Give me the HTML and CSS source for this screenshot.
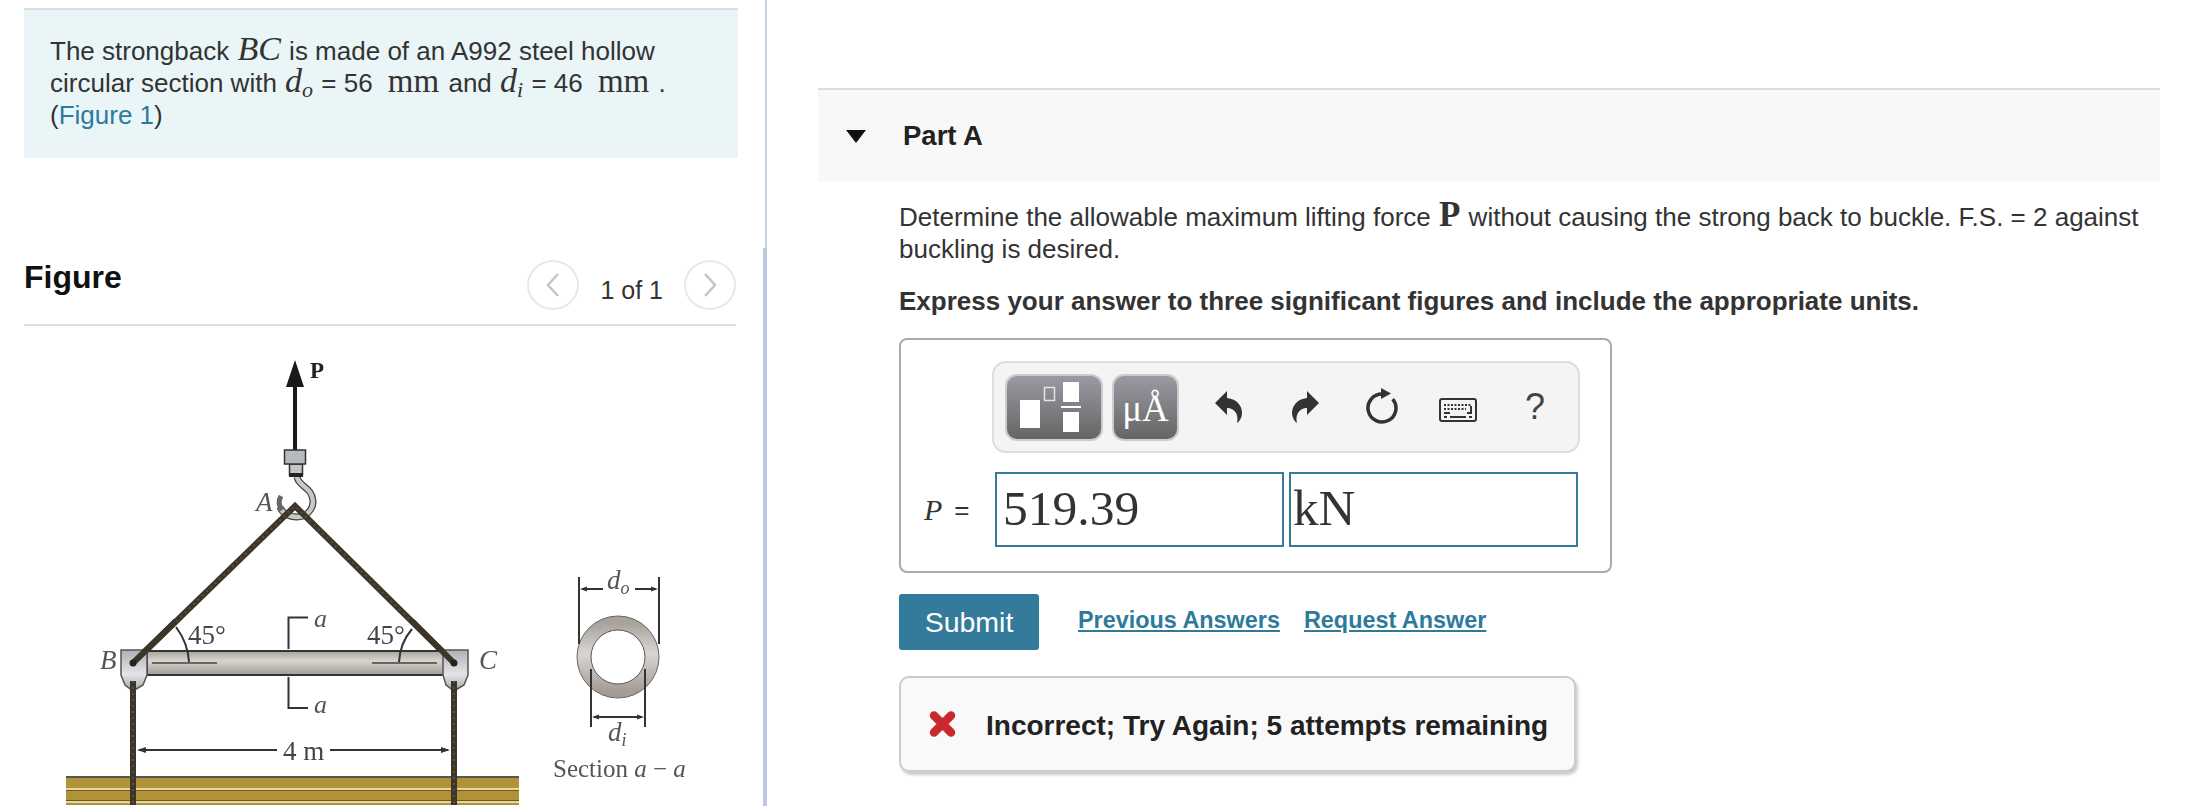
FILE: index.html
```html
<!DOCTYPE html>
<html lang="en">
<head>
<meta charset="utf-8">
<title>Part A</title>
<link rel="stylesheet" href="styles.css">
</head>
<body>
<div class="page">
  <section class="left">
    <div class="info">The strongback <span class="mi big">BC</span> is made of an A992 steel hollow<br>circular section with <span class="mi big">d<sub>o</sub></span> = 56 <span class="mu">mm</span> and <span class="mi big">d<sub>i</sub></span> = 46 <span class="mu">mm</span> .<br>(<a class="link" href="#">Figure 1</a>)</div>
    <header class="fig-head">
      <h2 class="fig-title">Figure</h2>
      <nav class="pager">
        <span class="circle"><svg width="16" height="26" viewBox="0 0 16 26"><path d="M13 2 3 13l10 11" fill="none" stroke="#c4c4c4" stroke-width="2.5"/></svg></span>
        <span class="count">1 of 1</span>
        <span class="circle"><svg width="16" height="26" viewBox="0 0 16 26"><path d="m3 2 10 11L3 24" fill="none" stroke="#c4c4c4" stroke-width="2.5"/></svg></span>
      </nav>
    </header>
    <svg class="diagram" width="714" height="479" viewBox="24 327 714 479">
      <defs>
        <linearGradient id="beam" x1="0" y1="0" x2="0" y2="1">
          <stop offset="0" stop-color="#a8a29b"/><stop offset=".4" stop-color="#d8d4cf"/><stop offset="1" stop-color="#a39d96"/>
        </linearGradient>
        <linearGradient id="plate" x1="0" y1="0" x2="0" y2="1">
          <stop offset="0" stop-color="#aeb2b6"/><stop offset=".6" stop-color="#e4e5e6"/><stop offset="1" stop-color="#9ea2a6"/>
        </linearGradient>
        <linearGradient id="ring" x1="0" y1="0" x2="0" y2="1">
          <stop offset="0" stop-color="#a8a29c"/><stop offset=".45" stop-color="#d9d6d2"/><stop offset="1" stop-color="#a59c96"/>
        </linearGradient>
      </defs>
      <!-- lumber -->
      <rect x="66" y="778" width="453" height="28" fill="#b09338"/>
      <rect x="66" y="777" width="453" height="2" fill="#555"/>
      <rect x="66" y="789" width="453" height="2" fill="#e6d89c"/>
      <rect x="66" y="791" width="453" height="1" fill="#6d5a1e"/>
      <rect x="66" y="802" width="453" height="2" fill="#e6d89c"/>
      <rect x="66" y="801" width="453" height="1" fill="#6d5a1e"/>
      <!-- lifting line and hook -->
      <path d="M295 361 304 388H286Z" fill="#1a1a1a"/>
      <rect x="293" y="386" width="4" height="66" fill="#1a1a1a"/>
      <path d="M297 478c2 10 15 10 16 24 0 10-8 16-16 16-8 0-15-4-17-10" fill="none" stroke="#444" stroke-width="7"/>
      <path d="M297 478c2 10 15 10 16 24 0 10-8 16-16 16-8 0-15-4-17-10" fill="none" stroke="#c8c8c4" stroke-width="4.5"/>
      <path d="M281 497c-3 5-2 10 1 14" fill="none" stroke="#666" stroke-width="5"/>
      <rect x="289.500" y="465" width="13" height="11" fill="#c3c6c9" stroke="#333" stroke-width="1.500"/>
      <rect x="289" y="474" width="14" height="4" fill="#222"/>
      <rect x="284.500" y="451" width="21" height="14" fill="#b6babd" stroke="#333" stroke-width="1.500"/>
      <!-- slings -->
      <path class="rope" d="M133 664 295 507 454 664"/>
      <path class="rope-mark" d="M133 664 295 507 454 664"/>
      <!-- beam -->
      <rect x="147" y="652" width="297" height="24" fill="url(#beam)" stroke="#333" stroke-width="2"/>
      <path d="M152 664h65M372 664h65" stroke="#666" stroke-width="2"/>
      <path class="plate" d="M121 651h26v25l-4 10-10 6-8-6-4-10Z"/>
      <path class="plate" d="M443 676V651h25v25l-4 10-10 6-8-6-3-10Z"/>
      <path class="rope" d="M133 664 176 622M454 664 412 622"/>
      <circle cx="133" cy="664" r="3.500" fill="#222"/>
      <circle cx="454" cy="664" r="3.500" fill="#222"/>
      <path class="rope thin" d="M133 682V806M454 682V806"/>
      <path class="rope-mark" d="M133 682V806M454 682V806"/>
      <!-- section cut -->
      <path class="thin-line" d="M308 618.500H288.500V650M288.500 678V709H308"/>
      <text class="f-i f-m" x="314" y="628">a</text>
      <text class="f-i f-m" x="314" y="714">a</text>
      <!-- angles -->
      <path class="thin-line" d="M176 628Q188 644 189 663M412 630Q400 644 399 663"/>
      <text class="f-r f-l" x="188" y="645">45°</text>
      <text class="f-r f-l" x="367" y="645">45°</text>
      <text class="f-i f-l" x="100" y="670">B</text>
      <text class="f-i f-l" x="479" y="670">C</text>
      <text class="f-i f-l" x="256" y="512">A</text>
      <text class="f-b" x="310" y="379">P</text>
      <!-- 4 m -->
      <path class="thin-line" d="M139 751H277M330 751H448"/>
      <path d="M137 751l9-3v6ZM450 751l-9-3v6Z" fill="#333"/>
      <text class="f-r f-l" x="283" y="761">4 m</text>
      <!-- section a-a -->
      <circle cx="618" cy="658" r="34" fill="none" stroke="url(#ring)" stroke-width="14"/>
      <circle cx="618" cy="658" r="41" fill="none" stroke="#666" stroke-width="1"/>
      <circle cx="618" cy="658" r="27" fill="#fff" stroke="#555" stroke-width="1"/>
      <path class="thin-line" d="M579 578V645M659 578V645M591 670V728M645 670V728M582 590H603M635 590H656M594 718H642"/>
      <path d="M580 590l7-2.500v5ZM658 590l-7-2.500v5ZM592 718l7-2.500v5ZM644 718l-7-2.500v5Z" fill="#333"/>
      <text class="f-i f-l" x="607" y="590">d<tspan class="f-s" dy="5">o</tspan></text>
      <text class="f-i f-l" x="608" y="742">d<tspan class="f-s" dy="5">i</tspan></text>
      <text class="f-r f-l f-grey" x="553" y="778">Section <tspan class="f-i">a</tspan> − <tspan class="f-i">a</tspan></text>
    </svg>
  </section>

  <div class="divider"><div class="divider-top"></div><div class="divider-bottom"></div></div>

  <main class="right">
    <header class="part-head">
      <span class="caret"></span>
      <h1 class="part-title">Part A</h1>
    </header>
    <div class="part-body">
      <p class="para">Determine the allowable maximum lifting force <span class="mb">P</span> without causing the strong back to buckle. F.S. = 2 against buckling is desired.</p>
      <p class="para strong">Express your answer to three significant figures and include the appropriate units.</p>

      <div class="answer">
        <div class="toolbar">
          <button class="tool tool-wide" type="button">
            <svg width="98" height="67" viewBox="0 0 98 67">
              <rect x="15" y="26" width="20" height="28" fill="#fff"/>
              <rect x="39.500" y="13.500" width="10" height="13" fill="none" stroke="#e4e4e4" stroke-width="1.500"/>
              <rect x="58" y="8" width="16" height="20" fill="#fff"/>
              <rect x="56" y="32" width="20" height="2" fill="#fff"/>
              <rect x="58" y="38" width="16" height="20" fill="#fff"/>
            </svg>
          </button>
          <button class="tool tool-unit" type="button">μÅ</button>
          <svg class="ic ic-undo" width="27" height="32" viewBox="0 0 27 32"><path d="M0 12 12 0v7c10 1 15 8 15 15 0 4-2 8-5 10 2-8-2-15-10-15v7Z" fill="#333"/></svg>
          <svg class="ic ic-redo" width="27" height="32" viewBox="0 0 27 32"><path d="M27 12 15 0v7C5 8 0 15 0 22c0 4 2 8 5 10-2-8 2-15 10-15v7Z" fill="#333"/></svg>
          <svg class="ic ic-reload" width="34" height="38" viewBox="0 0 34 38"><path d="M26.700 11A14 14 0 1 1 16 6" fill="none" stroke="#333" stroke-width="3.500"/><path d="M15 0 25 5.500 15 11Z" fill="#333"/></svg>
          <svg class="ic ic-keys" width="38" height="24" viewBox="0 0 38 24">
            <rect x="1" y="1" width="36" height="22" rx="2" fill="#f4f4f4" stroke="#333" stroke-width="2"/>
            <path d="M5 7h27M5 11h22" stroke="#333" stroke-width="2" stroke-dasharray="2 1.500"/>
            <path d="M5 15h6M28 15h5M32 8v8M5 19h3M11 19h16M30 19h3" stroke="#333" stroke-width="2"/>
          </svg>
          <span class="help">?</span>
        </div>
        <div class="answer-row">
          <div class="var"><i class="var-p">P</i><span class="var-eq">=</span></div>
          <div class="field">519.39</div>
          <div class="field field-unit">kN</div>
        </div>
      </div>

      <div class="actions">
        <button class="submit" type="button">Submit</button>
        <div class="links">
          <a class="link action-link" href="#">Previous Answers</a>
          <a class="link action-link" href="#">Request Answer</a>
        </div>
      </div>

      <div class="feedback">
        <svg width="27" height="26" viewBox="0 0 27 26"><path d="M5 4.500 22 21.500M22 4.500 5 21.500" stroke="#c9282d" stroke-width="8.500" stroke-linecap="round"/></svg>
        <span class="feedback-text">Incorrect; Try Again; 5 attempts remaining</span>
      </div>
    </div>
  </main>
</div>
</body>
</html>
```

FILE: styles.css
```css
* { box-sizing: border-box; }
html, body { margin: 0; padding: 0; background: #fff; }
body { font-family: "Liberation Sans", Arial, sans-serif; font-size: 26px; line-height: 32px; color: #333; }
.page { display: flex; width: 2212px; height: 806px; overflow: hidden; }

/* left column */
.left { width: 762px; flex: none; padding: 8px 0 0 24px; }
.info { width: 714px; height: 150px; padding: 25px 26px 0; background: #eaf5f8; border-top: 2px solid #ddd; white-space: nowrap; }
.mi { font-family: "Liberation Serif", serif; font-style: italic; line-height: 0; }
.big { font-size: 34px; margin: 0 1px; }
.mi sub { font-size: 22px; line-height: 0; vertical-align: -5px; }
.mu { font-family: "Liberation Serif", serif; font-size: 33px; line-height: 0; margin: 0 2px 0 8px; }
.mb { font-family: "Liberation Serif", serif; font-weight: bold; font-size: 35px; line-height: 0; padding: 0 1px; }
.link { color: #2d7a9c; text-decoration: none; }

.fig-head { width: 712px; margin-top: 102px; height: 66px; padding-bottom: 14px; border-bottom: 2px solid #ddd; display: flex; justify-content: space-between; align-items: flex-start; }
.fig-title { margin: 1px 0 0; font-size: 32px; line-height: 32px; font-weight: bold; color: #111; }
.pager { display: flex; gap: 21px; }
.circle { width: 52px; height: 50px; border: 2px solid #e8e8e8; border-radius: 50%; display: flex; align-items: center; justify-content: center; }
.count { padding-top: 14px; line-height: 32px; font-size: 25px; color: #333; }
.diagram { display: block; filter: blur(0.6px); }
.rope { fill: none; stroke: #3b3628; stroke-width: 6; }
.rope.thin { stroke-width: 6; }
.rope-mark { fill: none; stroke: #57513f; stroke-width: 2; stroke-dasharray: 2 4; }
.plate { fill: url(#plate); stroke: #555; stroke-width: 1.5; }
.thin-line { fill: none; stroke: #333; stroke-width: 2; }
.f-r { font-family: "Liberation Serif", serif; fill: #444; }
.f-i { font-family: "Liberation Serif", serif; font-style: italic; fill: #555; }
.f-b { font-family: "Liberation Serif", serif; font-weight: bold; font-size: 23px; fill: #222; }
.f-l { font-size: 27px; }
.f-m { font-size: 26px; }
.f-s { font-size: 18px; }
.f-grey { fill: #555; font-size: 25px; }

/* divider */
.divider { width: 5px; flex: none; display: flex; flex-direction: column; align-items: flex-end; }
.divider-top { width: 2px; height: 248px; background: #c3d1e2; }
.divider-bottom { width: 4px; flex: 1; background: #b9c9de; }

/* right column */
.right { flex: 1; padding: 88px 52px 0 51px; }
.part-head { height: 94px; background: #f8f8f8; border-top: 2px solid #ddd; display: flex; align-items: center; padding-left: 28px; gap: 37px; }
.caret { width: 0; height: 0; border-left: 10px solid transparent; border-right: 10px solid transparent; border-top: 13px solid #111; }
.part-title { margin: 0; font-size: 27.500px; line-height: 32px; font-weight: bold; color: #222; }
.part-body { padding-left: 81px; padding-top: 19px; }
.para { margin: 0 0 20px; }
.strong { font-weight: bold; margin-bottom: 21px; }

.answer { width: 713px; height: 235px; border: 2px solid #aaa; border-radius: 8px; padding: 21px 0 0 91px; }
.toolbar { width: 588px; height: 92px; border: 2px solid #ddd; border-radius: 14px; background: #f4f4f4; padding: 0 0 0 11px; display: flex; align-items: center; }
.tool { height: 67px; padding: 0; border: 2px solid #ccc; border-radius: 12px; background: linear-gradient(#9b99a2, #656565); display: block; }
.tool svg { display: block; margin: -2px; }
.tool-wide { width: 98px; }
.tool-unit { width: 67px; margin-left: 9px; color: #fff; font-family: "Liberation Serif", serif; font-size: 37px; line-height: 65px; }
.ic { display: block; flex: none; }
.ic-undo { margin-left: 36px; }
.ic-redo { margin-left: 50px; }
.ic-reload { margin-left: 47px; }
.ic-keys { margin-left: 39px; margin-top: 6px; }
.help { width: 24px; margin-left: 46px; text-align: center; font-size: 36px; color: #444; }

.answer-row { display: flex; align-items: stretch; height: 75px; margin: 19px 0 0 -89px; }
.var { width: 92px; padding-left: 21px; display: flex; align-items: center; gap: 12px; }
.var-p { font-family: "Liberation Serif", serif; font-size: 30px; color: #333; }
.var-eq { font-size: 26px; }
.field { width: 289px; margin-right: 5px; border: 2px solid #337a9b; padding-left: 6px; font-family: "Liberation Serif", serif; font-size: 49.500px; line-height: 69px; color: #333; }
.field-unit { padding-left: 2px; font-size: 51px; }

.actions { display: flex; align-items: flex-start; margin-top: 21px; gap: 39px; }
.submit { width: 140px; height: 56px; padding: 0; border: 0; border-radius: 3px; background: #337a9b; color: #fff; font-family: "Liberation Sans", Arial, sans-serif; font-size: 28.500px; }
.links { display: flex; gap: 24px; padding-top: 10px; }
.action-link { font-size: 23.400px; font-weight: bold; text-decoration: underline; }

.feedback { width: 677px; height: 96px; margin-top: 26px; display: flex; align-items: center; gap: 30px; padding-left: 28px; background: #f9f9f9; border: 2px solid #ccc; border-radius: 10px; box-shadow: 2px 3px 3px #ccc; }
.feedback svg { flex: none; }
.feedback-text { font-size: 28px; font-weight: bold; color: #222; white-space: nowrap; padding-top: 3px; }
```
